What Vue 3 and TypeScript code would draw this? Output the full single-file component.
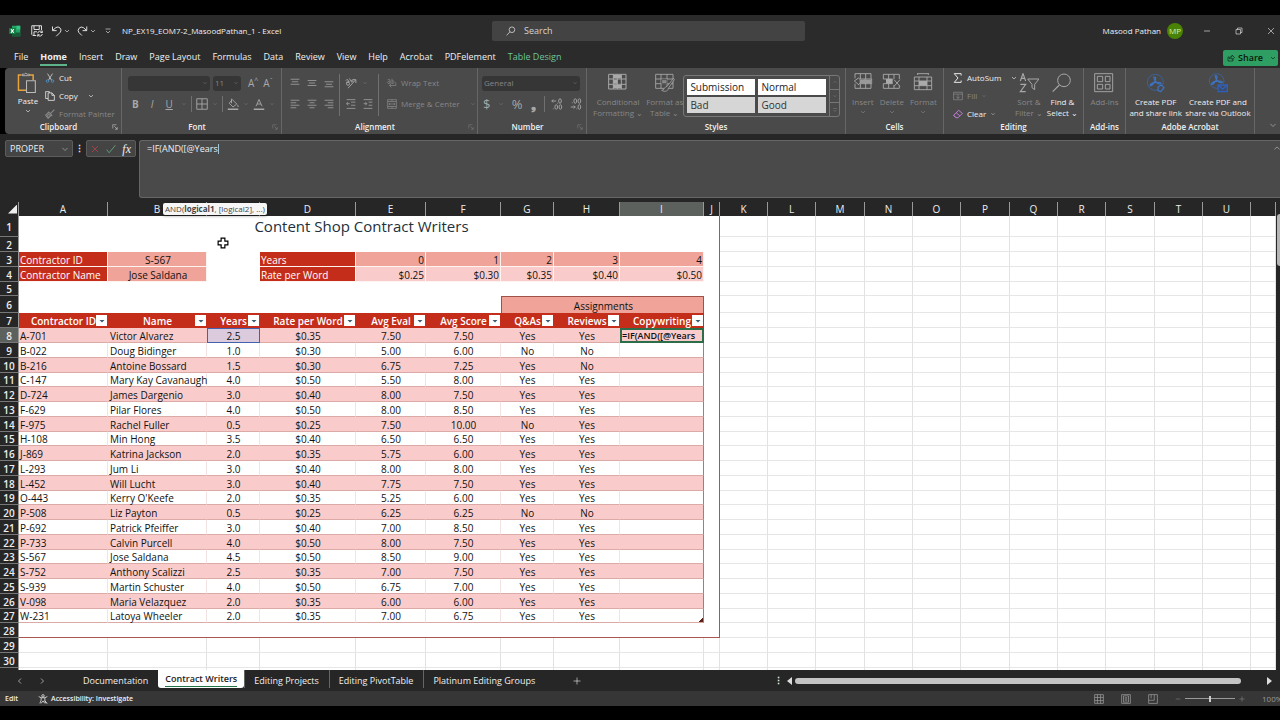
<script setup lang="ts">
import { ref } from 'vue'

interface Writer {
  id: string
  name: string
  years: string
  rate: string
  evalAvg: string
  score: string
  qa: string
  reviews: string
}

const source = `A-701|Victor Alvarez|2.5|$0.35|7.50|7.50|Yes|Yes
B-022|Doug Bidinger|1.0|$0.30|5.00|6.00|No|No
B-216|Antoine Bossard|1.5|$0.30|6.75|7.25|Yes|No
C-147|Mary Kay Cavanaugh|4.0|$0.50|5.50|8.00|Yes|Yes
D-724|James Dargenio|3.0|$0.40|8.00|7.50|Yes|Yes
F-629|Pilar Flores|4.0|$0.50|8.00|8.50|Yes|Yes
F-975|Rachel Fuller|0.5|$0.25|7.50|10.00|No|Yes
H-108|Min Hong|3.5|$0.40|6.50|6.50|Yes|Yes
J-869|Katrina Jackson|2.0|$0.35|5.75|6.00|Yes|Yes
L-293|Jum Li|3.0|$0.40|8.00|8.00|Yes|Yes
L-452|Will Lucht|3.0|$0.40|7.75|7.50|Yes|Yes
O-443|Kerry O'Keefe|2.0|$0.35|5.25|6.00|Yes|Yes
P-508|Liz Payton|0.5|$0.25|6.25|6.25|No|No
P-692|Patrick Pfeiffer|3.0|$0.40|7.00|8.50|Yes|Yes
P-733|Calvin Purcell|4.0|$0.50|8.00|7.50|Yes|Yes
S-567|Jose Saldana|4.5|$0.50|8.50|9.00|Yes|Yes
S-752|Anthony Scalizzi|2.5|$0.35|7.00|7.50|Yes|Yes
S-939|Martin Schuster|4.0|$0.50|6.75|7.00|Yes|Yes
V-098|Maria Velazquez|2.0|$0.35|6.00|6.00|Yes|Yes
W-231|Latoya Wheeler|2.0|$0.35|7.00|6.75|Yes|Yes`

const writers: Writer[] = source.split('\n').map((line) => {
  const [id, name, years, rate, evalAvg, score, qa, reviews] = line.split('|')
  return { id, name, years, rate, evalAvg, score, qa, reviews }
})

const headings = ['Contractor ID', 'Name', 'Years', 'Rate per Word', 'Avg Eval', 'Avg Score', 'Q&As', 'Reviews', 'Copywriting']
const rateRows = [
  { row: 3, label: 'Contractor ID', value: 'S-567', side: 'Years', cells: ['0', '1', '2', '3', '4'] },
  { row: 4, label: 'Contractor Name', value: 'Jose Saldana', side: 'Rate per Word', cells: ['$0.25', '$0.30', '$0.35', '$0.40', '$0.50'] },
]
const letters = 'ABCDEFGHIJKLMNOPQRSTU'.split('')
const spare = 12

const menus = ['File', 'Home', 'Insert', 'Draw', 'Page Layout', 'Formulas', 'Data', 'Review', 'View', 'Help', 'Acrobat', 'PDFelement', 'Table Design']
const sheets = ['Documentation', 'Contract Writers', 'Editing Projects', 'Editing PivotTable', 'Platinum Editing Groups']
const activeSheet = ref('Contract Writers')
const formula = ref('=IF(AND([@Years')
const nameBox = ref('PROPER')
const query = ref('')
const zoom = ref(50)
const fontName = ref('')
const fontSize = ref('11')

const ic = {
  excel: '<path fill="#21a366" stroke="none" d="M4 1h11v14H4z"/><path fill="#33c481" stroke="none" d="M10 1h5v5h-5z"/><path fill="#185c37" stroke="none" d="M4 10h11v5H4z"/><path fill="#107c41" stroke="none" d="M0 4h9v8H0z"/><path stroke="#fff" stroke-width="1.4" d="M2.600 5.600l3.800 4.800M6.400 5.600L2.600 10.400"/>',
  save: '<path d="M7 14H2.500L1 12.500V1h13v6M4 1v5h7V1M4 14V9h4"/><path d="M9 11a3 3 0 0 1 5-2l1 1M15 7.500V10h-2.500M15 12a3 3 0 0 1-5 2l-1-1M9 15.500V13h2.500"/>',
  undo: '<path d="M2 2v5.500h5.500M2.500 7l4-3.500a4.300 4.300 0 0 1 6 6L7 15"/>',
  redo: '<path d="M13 2v5.500H7.500M12.500 7l-4-3.500a4.500 4.500 0 0 0-6 6.500c1 1.500 3 2.500 4 4"/>',
  chev: '<path d="M4 6l4 4 4-4"/>',
  up: '<path d="M4 10l4-4 4 4"/>',
  collapse: '<path d="M1 5l7 7 7-7"/>',
  expand: '<path d="M1 12l7-7 7 7"/>',
  left: '<path d="M10 3L5 8l5 5"/>',
  right: '<path d="M6 3l5 5-5 5"/>',
  more: '<path d="M3 4h10M4 8l4 4 4-4"/>',
  search: '<circle cx="9.500" cy="6" r="4.500"/><path d="M6.300 9.300L1 15"/>',
  min: '<path d="M2 8h12"/>',
  restore: '<path d="M2 5h9v9H2zM5 5V2h9v9h-3"/>',
  close: '<path d="M2 2l12 12M14 2L2 14"/>',
  share: '<path d="M5 6H2v8h10v-4M5 10c0-4 2-5 5-5V2l5 5-5 4V8c-2 0-4 0-5 2z"/>',
  paste: '<path stroke="#e8a33d" stroke-width="2" d="M6 4H2v21h11M17 4h5v7"/><path stroke="#bbb" fill="#4a4a4a" d="M7 5V3h3a2.500 2.500 0 0 1 4 0h3v2z"/><path stroke="#bbb" fill="#4a4a4a" stroke-width="1.400" d="M13 12h12v16H13z"/>',
  cut: '<path stroke="#ddd" d="M4 1l6.500 10.500M12 1L5.500 11.500"/><circle stroke="#4b9fe0" cx="4" cy="13" r="2"/><circle stroke="#4b9fe0" cx="12" cy="13" r="2"/>',
  copy: '<path d="M5 12H1V1h6v2M5 3h6l4 4v8H5zM11 3v4h4"/>',
  brush: '<path d="M15 1L9 7M6 5l5 5-2 1-5-4zM4 7l-3 3 4 5 4-4M3 12l2-2M5 14l2-2" stroke-width="1.700"/>',
  launch: '<path d="M2 12V2h10M6 6l8 8M14 8v6H8"/>',
  borders: '<path d="M1 1h14v14H1zM8 1v14M1 8h14"/>',
  fill: '<path d="M7 2l6 6-5 4-5-5zM6 1v6M14 9l1 3"/><path d="M1 15h14" stroke-width="2"/>',
  fontcol: '<path d="M4 11l4-9 4 9M5.500 8h5"/><path d="M1 15h14" stroke-width="2"/>',
  top: '<path d="M1 2h14M3 6h10M1 10h14"/>',
  mid: '<path d="M1 4h14M3 8h10M1 12h14"/>',
  bot: '<path d="M1 6h14M3 10h10M1 14h14"/>',
  al: '<path d="M1 2h14M1 6h9M1 10h14M1 14h9"/>',
  ac: '<path d="M1 2h14M4 6h8M1 10h14M4 14h8"/>',
  ar: '<path d="M1 2h14M6 6h9M1 10h14M6 14h9"/>',
  orient: '<path d="M4 15L14 4M10 3.500h4.500V8M1 5l2-2 3 4M1.500 7.500l4-2"/><circle cx="4" cy="9" r="2"/><path d="M6 2l3 5M8 5c3-2 4 1 1 2"/>',
  outd: '<path d="M1 1h14M8 5h7M8 10h7M1 15h14M6 7.500H1M3 5L1 7.500 3 10"/>',
  ind: '<path d="M1 1h14M9 5h6M9 10h6M1 15h14M1 7.500h5M4 5l2 2.500L4 10"/>',
  wrap: '<path d="M1 3c3-2 4 0 4 2v4M5 5c-5 0-5 4-2 4 1 0 2-1 2-2M8 1v8M8 5c4-2 5 4 0 4M14 7v5H4M7 9l-3 3 3 3"/>',
  merge: '<path d="M1 1h14v14H1zM1 4h14M1 12h14M8 1v3M8 12v3M3 8h10M5 6L3 8l2 2M11 6l2 2-2 2"/>',
  decUp: '<path d="M7 4H1M3 2L1 4l2 2M8.500 6.500v1M3 14v1"/><ellipse cx="12" cy="4" rx="1.800" ry="3"/><ellipse cx="7" cy="12" rx="1.800" ry="3"/><ellipse cx="12.500" cy="12" rx="1.800" ry="3"/>',
  decDn: '<path d="M1 12h6M5 10l2 2-2 2M3 6v1M9 14v1"/><ellipse cx="7" cy="4" rx="1.800" ry="3"/><ellipse cx="12.500" cy="4" rx="1.800" ry="3"/><ellipse cx="12.500" cy="12" rx="1.800" ry="3"/>',
  cond: '<path d="M1 2h26v22H1zM1 9h26M1 17h26M8 2v22M20 2v22M14 2v22" stroke-width="1.500"/><path fill="#aaa" stroke="none" d="M8 3h12v5H8zM8 10h6v6H8zM8 18h12v5H8z"/>',
  fmtTable: '<path d="M1 2h26v21H1zM1 9h26M1 16h26M9 2v21M18 2v21" stroke-width="1.300"/><path fill="#888" stroke="#4a4a4a" d="M10 10h8v6h-8z"/><path fill="#4a4a4a" d="M28 8L18 20l-2 1c-3 1-2 5-6 5 5 3 10 1 10-3L29 10z"/>',
  insert: '<path d="M3 1h24v8M3 1v7M3 16v7h24v-7M11 1v8M19 1v8M11 16v7M19 16v7M9 9h19v7H9M9 7l-7 5 7 6M18 9v7" stroke-width="1.400"/><path fill="#999" stroke="none" d="M10 10h17v5H10z"/>',
  del: '<path d="M2 2h24v7M2 2v7h14M2 16h14M2 16v7h24v-4M10 2v7M18 2v7M10 16v7M18 18v5M18 10l9 10M27 10l-9 10" stroke-width="1.400"/><path fill="#aaa" stroke="none" d="M6 9h10v7H6z"/>',
  format: '<path d="M2 6h26v19H2zM2 12h26M2 19h26M9 6v19M21 6v19M7 1h16M7 0v3M23 0v3" stroke-width="1.400"/><path fill="#aaa" stroke="none" d="M9 12h12v7H9z"/>',
  sum: '<path d="M13 4V1H2l6 7-6 7h11v-3" stroke-width="1.500"/>',
  down: '<path d="M1 2h14v12H1zM1 5h14M8 6v6M5 9l3 3 3-3"/>',
  erase: '<path stroke="#c07bd6" stroke-width="1.600" d="M9 2l6 5-7 7H5l-4-4zM5 6l6 5M1 10l4 4"/>',
  sort: '<path d="M2 12l4-11 4 11M3.500 8h5M2 17h8L2 28h8" stroke-width="1.700"/><path d="M13 9h17l-6.500 8v8l-4-3v-5z" stroke-width="1.500"/>',
  find: '<circle cx="18" cy="11" r="9.500" stroke-width="1.500"/><path stroke-width="1.700" d="M11 18L1 28"/>',
  addins: '<path d="M1 1h27v27H1zM5 5h8v8H5zM17 5h7v8h-7zM5 17h8v7H5zM17 17h7v7h-7z" stroke-width="1.400"/>',
  pdf: '<circle cx="14" cy="14" r="12" stroke="#3a629c" stroke-width="1.400"/><path stroke="#3c74c4" stroke-width="1.700" d="M13 6c3 0 1 6-2 10s-6 4-4 1 13-4 15-2-5 3-8-3-3-6-1-6"/><path stroke="#3c74c4" stroke-width="1.800" fill="#4a4a4a" d="M18 21l5-3 4 4-5 6-4-2z"/>',
  mail: '<circle cx="13" cy="12" r="11" stroke="#3a629c" stroke-width="1.400"/><path stroke="#3c74c4" stroke-width="1.700" d="M12 4c3 0 1 6-2 10s-6 4-4 1 13-4 15-2-5 3-8-3-3-6-1-6"/><path stroke="#2f5fba" stroke-width="2" fill="#3d4b68" d="M15 18h14v10H15zM15 18l7 6 7-6"/>',
  cancel: '<path stroke="#b8434a" stroke-width="1.500" d="M2 2l12 12M14 2L2 14"/>',
  ok: '<path stroke="#5ea37c" stroke-width="1.500" d="M1 9l4 5L15 2"/>',
  access: '<circle cx="8" cy="3" r="2"/><path d="M1 4l4 2v4l-2 5M15 4l-4 2v4l2 5M5 6h6M5 15l3-4 3 4M10 11l5 4"/>',
  plus: '<path d="M8 1v14M1 8h14"/>',
  normal: '<path d="M1 1h14v14H1zM1 5.500h14M1 10.500h14M5.500 1v14M10.500 1v14"/>',
  layout: '<path d="M1 1h14v14H1zM4 3h8v10H4zM6 6h4M6 8h4M6 10h4"/>',
  breaks: '<path d="M1 1h14v14H1zM1 10h9V1M5 1v6"/>',
  filter: '<path fill="#3c5a6a" stroke="none" d="M3 6h10l-5 5z"/>',
  cross: '<path fill="#fff" stroke="#000" stroke-width="1.600" d="M5.500 1.500h5v4h4v5h-4v4h-5v-4h-4v-5h4z"/>',
}
</script>

<template>
  <main class="screen">
    <header class="title-bar">
      <div class="quick">
        <svg class="i12" viewBox="0 0 16 16" v-html="ic.excel" />
        <button class="ib save" aria-label="Save"><svg class="i12" viewBox="0 0 16 16" v-html="ic.save" /></button>
        <button class="ib" aria-label="Undo"><svg class="i12" viewBox="0 0 16 16" v-html="ic.undo" /><svg class="i8" viewBox="0 0 16 16" v-html="ic.chev" /></button>
        <button class="ib" aria-label="Redo"><svg class="i12" viewBox="0 0 16 16" v-html="ic.redo" /><svg class="i8" viewBox="0 0 16 16" v-html="ic.chev" /></button>
        <button class="ib more" aria-label="Customize toolbar"><svg class="i8" viewBox="0 0 16 16" v-html="ic.more" /></button>
        <span class="doc">NP_EX19_EOM7-2_MasoodPathan_1 - Excel</span>
      </div>
      <label class="search">
        <svg class="i10" viewBox="0 0 16 16" v-html="ic.search" />
        <input v-model="query" type="text" placeholder="Search" aria-label="Search">
      </label>
      <div class="account">
        <span>Masood Pathan</span>
        <span class="avatar">MP</span>
        <button class="ib" aria-label="Minimize"><svg class="i8" viewBox="0 0 16 16" v-html="ic.min" /></button>
        <button class="ib" aria-label="Restore"><svg class="i8" viewBox="0 0 16 16" v-html="ic.restore" /></button>
        <button class="ib" aria-label="Close"><svg class="i8" viewBox="0 0 16 16" v-html="ic.close" /></button>
      </div>
    </header>

    <nav class="menus">
      <button v-for="m in menus" :key="m" :class="{ on: m === 'Home', ctx: m === 'Table Design' }">{{ m }}</button>
      <button class="share"><svg class="i8" viewBox="0 0 16 16" v-html="ic.share" />Share<svg class="i8 drop" viewBox="0 0 16 16" v-html="ic.chev" /></button>
    </nav>

    <section class="ribbon">
      <div class="group clipboard">
        <div class="tools">
          <button class="big bright"><svg class="i24" viewBox="0 0 30 30" v-html="ic.paste" /><span>Paste</span><svg class="i8" viewBox="0 0 16 16" v-html="ic.chev" /></button>
          <div class="stack">
            <button class="line bright"><svg class="i10" viewBox="0 0 16 16" v-html="ic.cut" />Cut</button>
            <button class="line bright"><svg class="i10" viewBox="0 0 16 16" v-html="ic.copy" />Copy<svg class="i8 push" viewBox="0 0 16 16" v-html="ic.chev" /></button>
            <button class="line"><svg class="i10" viewBox="0 0 16 16" v-html="ic.brush" />Format Painter</button>
          </div>
        </div>
        <div class="caption"><span>Clipboard</span><svg class="i6 bright" viewBox="0 0 16 16" v-html="ic.launch" /></div>
      </div>

      <div class="group font">
        <div class="tools rows">
          <div class="row">
            <label class="combo wide"><input v-model="fontName" type="text" aria-label="Font"><svg class="i6" viewBox="0 0 16 16" v-html="ic.chev" /></label>
            <label class="combo slim"><input v-model="fontSize" type="text" aria-label="Font size"><svg class="i6" viewBox="0 0 16 16" v-html="ic.chev" /></label>
            <button class="letter grow">A<sup>^</sup></button>
            <button class="letter">A<sup>ˇ</sup></button>
          </div>
          <div class="row spread">
            <button class="letter style"><b>B</b></button>
            <button class="letter style"><i>I</i></button>
            <button class="letter style"><u>U</u></button>
            <svg class="i6" viewBox="0 0 16 16" v-html="ic.chev" />
            <span class="bar" />
            <button class="ib" aria-label="Borders"><svg class="i12" viewBox="0 0 16 16" v-html="ic.borders" /></button>
            <svg class="i6" viewBox="0 0 16 16" v-html="ic.chev" />
            <span class="bar" />
            <button class="ib" aria-label="Fill color"><svg class="i12" viewBox="0 0 16 16" v-html="ic.fill" /></button>
            <svg class="i6" viewBox="0 0 16 16" v-html="ic.chev" />
            <button class="ib" aria-label="Font color"><svg class="i12" viewBox="0 0 16 16" v-html="ic.fontcol" /></button>
            <svg class="i6" viewBox="0 0 16 16" v-html="ic.chev" />
          </div>
        </div>
        <div class="caption"><span>Font</span><svg class="i6" viewBox="0 0 16 16" v-html="ic.launch" /></div>
      </div>

      <div class="group align">
        <div class="tools">
          <div class="pads">
            <button v-for="k in (['top', 'mid', 'bot', 'al', 'ac', 'ar'] as const)" :key="k" class="ib" :aria-label="k"><svg class="i10" viewBox="0 0 16 16" v-html="ic[k]" /></button>
          </div>
          <span class="bar tall" />
          <div class="pads two">
            <button class="ib" aria-label="Orientation"><svg class="i12" viewBox="0 0 16 16" v-html="ic.orient" /></button>
            <svg class="i6 mark" viewBox="0 0 16 16" v-html="ic.chev" />
            <button class="ib" aria-label="Decrease indent"><svg class="i10" viewBox="0 0 16 16" v-html="ic.outd" /></button>
            <button class="ib" aria-label="Increase indent"><svg class="i10" viewBox="0 0 16 16" v-html="ic.ind" /></button>
          </div>
          <span class="bar tall" />
          <div class="stack duo">
            <button class="line"><svg class="i10" viewBox="0 0 16 16" v-html="ic.wrap" />Wrap Text</button>
            <button class="line"><svg class="i10" viewBox="0 0 16 16" v-html="ic.merge" />Merge &amp; Center<svg class="i6 push" viewBox="0 0 16 16" v-html="ic.chev" /></button>
          </div>
        </div>
        <div class="caption"><span>Alignment</span><svg class="i6" viewBox="0 0 16 16" v-html="ic.launch" /></div>
      </div>

      <div class="group number">
        <div class="tools rows">
          <div class="row">
            <button class="combo full"><span>General</span><svg class="i6" viewBox="0 0 16 16" v-html="ic.chev" /></button>
          </div>
          <div class="row spread">
            <button class="letter sym">$</button>
            <svg class="i6" viewBox="0 0 16 16" v-html="ic.chev" />
            <button class="letter sym">%</button>
            <button class="letter sym"><b>❟</b></button>
            <span class="bar" />
            <button class="ib" aria-label="Increase decimal"><svg class="i12" viewBox="0 0 16 16" v-html="ic.decUp" /></button>
            <button class="ib" aria-label="Decrease decimal"><svg class="i12" viewBox="0 0 16 16" v-html="ic.decDn" /></button>
          </div>
        </div>
        <div class="caption"><span>Number</span><svg class="i6" viewBox="0 0 16 16" v-html="ic.launch" /></div>
      </div>

      <div class="group styles">
        <div class="tools">
          <button class="big"><svg class="i20" viewBox="0 0 30 30" v-html="ic.cond" /><span>Conditional<br>Formatting ⌄</span></button>
          <button class="big second"><svg class="i20" viewBox="0 0 30 30" v-html="ic.fmtTable" /><span>Format as<br>Table ⌄</span></button>
          <div class="gallery">
            <div class="swatches">
              <button class="hot">Submission</button>
              <button class="hot">Normal</button>
              <button>Bad</button>
              <button>Good</button>
            </div>
            <div class="spin">
              <button aria-label="Previous styles"><svg class="i6" viewBox="0 0 16 16" v-html="ic.up" /></button>
              <button aria-label="Next styles"><svg class="i6" viewBox="0 0 16 16" v-html="ic.chev" /></button>
              <button aria-label="All styles"><svg class="i6" viewBox="0 0 16 16" v-html="ic.more" /></button>
            </div>
          </div>
        </div>
        <div class="caption"><span>Styles</span></div>
      </div>

      <div class="group cells">
        <div class="tools even">
          <button class="big"><svg class="i20" viewBox="0 0 30 30" v-html="ic.insert" /><span>Insert</span><svg class="i8" viewBox="0 0 16 16" v-html="ic.chev" /></button>
          <button class="big"><svg class="i20" viewBox="0 0 30 30" v-html="ic.del" /><span>Delete</span><svg class="i8" viewBox="0 0 16 16" v-html="ic.chev" /></button>
          <button class="big"><svg class="i20" viewBox="0 0 30 30" v-html="ic.format" /><span>Format</span><svg class="i8" viewBox="0 0 16 16" v-html="ic.chev" /></button>
        </div>
        <div class="caption"><span>Cells</span></div>
      </div>

      <div class="group editing">
        <div class="tools">
          <div class="stack">
            <button class="line bright"><svg class="i10" viewBox="0 0 16 16" v-html="ic.sum" />AutoSum<svg class="i8 push" viewBox="0 0 16 16" v-html="ic.chev" /></button>
            <button class="line"><svg class="i10" viewBox="0 0 16 16" v-html="ic.down" />Fill<svg class="i6" viewBox="0 0 16 16" v-html="ic.chev" /></button>
            <button class="line bright"><svg class="i10" viewBox="0 0 16 16" v-html="ic.erase" />Clear<svg class="i6" viewBox="0 0 16 16" v-html="ic.chev" /></button>
          </div>
          <button class="big"><svg class="i20" viewBox="0 0 30 30" v-html="ic.sort" /><span>Sort &amp;<br>Filter ⌄</span></button>
          <button class="big bright"><svg class="i20" viewBox="0 0 30 30" v-html="ic.find" /><span>Find &amp;<br>Select ⌄</span></button>
        </div>
        <div class="caption"><span>Editing</span></div>
      </div>

      <div class="group addins">
        <div class="tools even">
          <button class="big"><svg class="i20" viewBox="0 0 30 30" v-html="ic.addins" /><span>Add-ins</span></button>
        </div>
        <div class="caption"><span>Add-ins</span></div>
      </div>

      <div class="group acrobat">
        <div class="tools even">
          <button class="big bright"><svg class="i20" viewBox="0 0 30 30" v-html="ic.pdf" /><span>Create PDF<br>and share link</span></button>
          <button class="big bright"><svg class="i20" viewBox="0 0 30 30" v-html="ic.mail" /><span>Create PDF and<br>share via Outlook</span></button>
        </div>
        <div class="caption"><span>Adobe Acrobat</span></div>
      </div>
      <button class="ib collapse" aria-label="Collapse ribbon"><svg class="i6" viewBox="0 0 16 16" v-html="ic.collapse" /></button>
    </section>

    <section class="formula-bar">
      <label class="name-box"><input v-model="nameBox" type="text" aria-label="Name box"><svg class="i6" viewBox="0 0 16 16" v-html="ic.collapse" /></label>
      <span class="dots">⋮</span>
      <div class="fx">
        <button class="ib" aria-label="Cancel"><svg class="i8" viewBox="0 0 16 16" v-html="ic.cancel" /></button>
        <button class="ib" aria-label="Enter"><svg class="i10" viewBox="0 0 16 16" v-html="ic.ok" /></button>
        <button class="ib fn" aria-label="Insert function"><i>fx</i></button>
      </div>
      <div class="entry">
        <textarea v-model="formula" aria-label="Formula" spellcheck="false" rows="1" />
        <span class="caret" />
        <svg class="i6" viewBox="0 0 16 16" v-html="ic.expand" />
      </div>
    </section>

    <section class="sheet">
      <div class="pane">
        <table>
          <colgroup>
            <col class="c-head"><col class="c-a"><col class="c-b"><col class="c-c"><col class="c-d"><col class="c-e"><col class="c-f"><col class="c-c"><col class="c-h"><col class="c-i"><col class="c-j">
            <col v-for="n in 11" :key="n" :class="n % 3 === 0 ? 'c-49' : 'c-48'">
            <col>
          </colgroup>
          <thead>
            <tr>
              <th class="corner"><span /></th>
              <th v-for="l in letters" :key="l" scope="col" :class="{ cur: l === 'I' }">{{ l }}</th>
              <th />
            </tr>
          </thead>
          <tbody>
            <tr class="r21">
              <th scope="row">1</th>
              <td class="heading" colspan="9">Content Shop Contract Writers</td>
              <td class="edge" />
              <td v-for="n in spare" :key="n" class="g" />
            </tr>
            <tr class="r15">
              <th scope="row">2</th>
              <td colspan="9" />
              <td class="edge" />
              <td v-for="n in spare" :key="n" class="g" />
            </tr>
            <tr v-for="r in rateRows" :key="r.row" class="r15">
              <th scope="row">{{ r.row }}</th>
              <td class="red">{{ r.label }}</td>
              <td class="rose mid">{{ r.value }}</td>
              <td />
              <td class="red">{{ r.side }}</td>
              <td v-for="c in r.cells" :key="c" class="end" :class="r.row === 3 ? 'rose' : 'pink'">{{ c }}</td>
              <td class="edge" />
              <td v-for="n in spare" :key="n" class="g" />
            </tr>
            <tr class="r14">
              <th scope="row">5</th>
              <td colspan="9" />
              <td class="edge" />
              <td v-for="n in spare" :key="n" class="g" />
            </tr>
            <tr class="r17">
              <th scope="row">6</th>
              <td colspan="6" />
              <td class="assign" colspan="3">Assignments</td>
              <td class="edge" />
              <td v-for="n in spare" :key="n" class="g" />
            </tr>
            <tr class="r15">
              <th scope="row">7</th>
              <td v-for="h in headings" :key="h" class="head">
                <div><span>{{ h }}</span><button :aria-label="'Filter ' + h"><svg class="i8" viewBox="0 0 16 16" v-html="ic.filter" /></button></div>
              </td>
              <td class="edge" />
              <td v-for="n in spare" :key="n" class="g" />
            </tr>
            <tr v-for="(w, i) in writers" :key="w.id" class="data" :class="[i % 4 === 3 ? 'r14' : 'r15', { band: i % 2 === 0 }]">
              <th scope="row" :class="{ cur: i === 0 }">{{ i + 8 }}</th>
              <td>{{ w.id }}</td>
              <td>{{ w.name }}</td>
              <td class="mid" :class="{ ref: i === 0 }">{{ w.years }}</td>
              <td class="mid">{{ w.rate }}</td>
              <td class="mid">{{ w.evalAvg }}</td>
              <td class="mid">{{ w.score }}</td>
              <td class="mid">{{ w.qa }}</td>
              <td class="mid">{{ w.reviews }}</td>
              <td class="last" :class="{ edit: i === 0, fold: i === 19 }">{{ i === 0 ? '=IF(AND([@Years' : '' }}</td>
              <td class="edge" />
              <td v-for="n in spare" :key="n" class="g" />
            </tr>
            <tr class="r15 close">
              <th scope="row">28</th>
              <td colspan="9" />
              <td class="edge" />
              <td v-for="n in spare" :key="n" class="g" />
            </tr>
            <tr v-for="r in ['29', '30', '']" :key="r" class="r15">
              <th scope="row">{{ r }}</th>
              <td v-for="n in spare + 10" :key="n" class="g" />
            </tr>
          </tbody>
        </table>
        <div class="tip">AND(<b>logical1</b>, [logical2], ...)</div>
        <svg class="i12 pointer" viewBox="0 0 16 16" v-html="ic.cross" />
      </div>
      <div class="vscroll"><span /></div>
    </section>

    <footer class="tabs">
      <button class="ib" aria-label="Previous sheet"><svg class="i8" viewBox="0 0 16 16" v-html="ic.left" /></button>
      <button class="ib" aria-label="Next sheet"><svg class="i8" viewBox="0 0 16 16" v-html="ic.right" /></button>
      <div class="names">
        <button v-for="s in sheets" :key="s" :class="{ active: s === activeSheet }" @click="activeSheet = s"><span>{{ s }}</span></button>
      </div>
      <button class="ib add" aria-label="New sheet"><svg class="i8" viewBox="0 0 16 16" v-html="ic.plus" /></button>
      <div class="hscroll"><span class="dots">⋮</span><span class="tri back" /><span class="track"><span class="thumb" /></span><span class="tri" /></div>
    </footer>

    <footer class="status">
      <span>Edit</span>
      <span class="acc"><svg class="i10" viewBox="0 0 16 16" v-html="ic.access" />Accessibility: Investigate</span>
      <div class="views">
        <button class="ib" aria-label="Normal view"><svg class="i10" viewBox="0 0 16 16" v-html="ic.normal" /></button>
        <button class="ib" aria-label="Page layout"><svg class="i10" viewBox="0 0 16 16" v-html="ic.layout" /></button>
        <button class="ib" aria-label="Page breaks"><svg class="i10" viewBox="0 0 16 16" v-html="ic.breaks" /></button>
        <div class="zoom"><svg class="i6" viewBox="0 0 16 16" v-html="ic.min" /><input v-model="zoom" type="range" min="0" max="100" aria-label="Zoom"><svg class="i6" viewBox="0 0 16 16" v-html="ic.plus" /></div>
        <span class="pct">100%</span>
      </div>
    </footer>
  </main>
</template>

<style>
body { background: #000; overflow: hidden; }
</style>

<style scoped>
* { box-sizing: border-box; }
.screen { display: flex; flex-direction: column; height: 100vh; padding: 15px 0 14px; background: #000; color: #f0f0f0; font: 9px/12px "Open Sans", "Noto Sans", sans-serif; white-space: nowrap; overflow: hidden; }
button, input, textarea { font: inherit; color: inherit; background: none; border: 0; padding: 0; margin: 0; outline: 0; min-width: 0; }
svg { fill: none; stroke: currentColor; stroke-width: 1.2; flex: none; display: block; }
.i6 { width: 6px; height: 6px; }
.i8 { width: 8px; height: 8px; }
.i10 { width: 10px; height: 10px; }
.i12 { width: 12px; height: 12px; }
.i20 { width: 20px; height: 20px; }
.i24 { width: 22px; height: 22px; }
.ib { display: flex; align-items: center; justify-content: center; }

.title-bar { display: grid; grid-template-columns: 492fr 313fr 475fr; align-items: center; height: 32px; background: #2b2b2b; font-size: 8px; }
.quick { display: flex; align-items: center; gap: 6px; padding-left: 9px; }
.quick .save { padding: 0 2px 0 4px; }
.quick .more { padding: 0 4px 0 1px; }
.search { display: flex; align-items: center; gap: 8px; height: 20px; padding: 0 14px; border-radius: 2px; background: #434343; color: #ddd; }
.search input { flex: 1; font-size: 9px; }
.search input::placeholder { color: #d4d4d4; opacity: 1; }
.account { display: flex; align-items: center; justify-content: flex-end; gap: 24px; padding-right: 5px; }
.account > span:first-child { margin-right: -18px; }
.avatar { width: 16px; height: 16px; margin-right: -4px; border-radius: 50%; background: #498205; color: #d8f0b0; line-height: 16px; text-align: center; }

.menus { display: flex; align-items: center; gap: 12px; height: 21px; padding: 0 2px 0 14px; background: #2b2b2b; }
.menus button { height: 16px; padding-top: 1px; border-bottom: 2px solid transparent; }
.menus .on { font-weight: 700; border-color: #5fb38a; }
.menus .ctx { color: #6cc79b; }
.menus .share { display: flex; align-items: center; gap: 3px; margin-left: auto; padding: 0 1px 0 4px; border: 0; border-radius: 2px; background: #2f9e62; color: #08180f; font-weight: 600; }
.share .drop { margin-left: 3px; }

.ribbon { display: flex; height: 66px; margin-left: 5px; border-radius: 4px 0 0 4px; background: #4a4a4a; color: #878787; font-size: 8px; }
.group { display: flex; flex-direction: column; flex: none; border-right: 1px solid #666; }
.tools { display: flex; flex: 1; min-height: 0; padding-top: 4px; }
.caption { display: flex; align-items: center; height: 14px; color: #f0f0f0; font-weight: 600; }
.caption span { flex: 1; text-align: center; }
.caption svg { margin-right: 3px; color: #888; }
.bright, .caption svg.bright { color: #f0f0f0; }
.big { display: flex; flex-direction: column; align-items: center; align-self: flex-start; gap: 1px; line-height: 11px; text-align: center; }
.big .i20 { margin: 1px 0 2px; color: #a8a8a8; }
.stack { display: flex; flex-direction: column; align-items: flex-start; }
.line { display: flex; align-items: center; gap: 4px; height: 17px; padding-bottom: 5px; }
.push { margin-left: 5px; }
.rows { flex-direction: column; gap: 5px; padding: 7px 6px 0; }
.row { display: flex; align-items: center; height: 16px; gap: 3px; }
.spread { justify-content: space-between; gap: 0; }
.combo { display: flex; align-items: center; justify-content: space-between; height: 15px; padding: 0 2px; border-radius: 3px; background: #363636; }
.combo.wide { flex: none; width: 82px; }
.combo.slim { flex: none; width: 28px; }
.combo.full { width: 98px; text-align: left; }
.combo input { width: 100%; }
.letter { font-size: 10px; line-height: 14px; color: #a8a8a8; padding: 0 1px; }
.letter.style { padding: 0 4px; }
.letter sup { font-size: 7px; line-height: 6px; }
.letter.sym { font-size: 13px; }
.ribbon .rows .ib, .pads .ib { color: #a8a8a8; }
.bar { width: 1px; height: 16px; background: #707070; }
.bar.tall { height: 42px; margin-top: 2px; }
.clipboard { width: 117px; }
.clipboard .tools { padding-left: 12px; gap: 6px; }
.clipboard .stack { gap: 1px; }
.grow { margin-left: 3px; }
.font { width: 160px; }
.align { width: 196px; }
.align .tools { padding-left: 4px; gap: 2px; }
.pads { display: grid; grid-template-columns: repeat(3, 17px); grid-template-rows: 22px 20px; align-items: center; align-self: flex-start; }
.pads.two { grid-template-columns: 17px 17px; }
.mark { margin-left: 3px; }
.duo { padding: 0 0 0 6px; }
.duo .line { height: 21px; padding: 0; }
.duo .push { margin-left: 6px; }
.number { width: 109px; }
.number .rows { padding: 7px 4px 0; }
.styles { width: 259px; }
.styles .tools { padding-left: 6px; }
.styles .second { margin-left: 3px; }
.gallery { display: flex; align-self: flex-start; height: 42px; margin: 3px 0 0; border: 1px solid #777; border-radius: 3px; }
.swatches { display: grid; grid-template-columns: 68px 68px; grid-auto-rows: 16px; gap: 2px 3px; padding: 3px; }
.swatches button { padding-left: 3px; background: #d6d6d6; color: #333; font-size: 10px; line-height: 14px; text-align: left; }
.swatches .hot { background: #fff; color: #222; }
.spin { display: flex; flex-direction: column; width: 10px; border-left: 1px solid #777; }
.spin button { display: flex; flex: 1; align-items: center; justify-content: center; }
.spin button + button { border-top: 1px solid #777; }
.cells { width: 98px; }
.even { justify-content: space-evenly; }
.editing { width: 140px; }
.editing .tools { padding-left: 9px; gap: 4px; }
.editing .stack { width: 58px; gap: 1px; }
.addins { width: 42px; }
.acrobat { width: 129px; }
.collapse { flex: 1; align-items: flex-end; padding: 0 0 6px 10px; color: #eee; }

.formula-bar { display: flex; align-items: flex-start; height: 68px; padding-top: 6px; padding-left: 5px; background: #262626; }
.name-box { display: flex; align-items: center; width: 68px; height: 17px; padding: 0 4px; border: 1px solid #5c5c5c; border-radius: 2px; background: #444; }
.name-box input { flex: 1; }
.formula-bar .dots { width: 13px; line-height: 17px; text-align: center; font-weight: 700; }
.fx { display: flex; align-items: center; justify-content: space-between; width: 50px; height: 17px; margin-right: 3px; padding: 0 4px; border: 1px solid #5c5c5c; border-radius: 2px; background: #444; }
.fn { font: 12px/14px "Liberation Serif", serif; }
.entry { display: flex; flex: 1; height: 58px; border: 1px solid #666; border-right: 0; border-radius: 3px 0 0 3px; background: #4a4a4a; }
.entry textarea { field-sizing: content; padding: 1px 0 0 7px; resize: none; overflow: hidden; white-space: pre; line-height: 13px; }
.caret { width: 1px; height: 10px; margin-top: 3px; background: #9fc4d8; }
.entry svg { margin: 4px 0 0 auto; }

.sheet { display: flex; flex: 1; min-height: 0; background: #262626; }
.pane { position: relative; flex: 1; min-width: 0; overflow: hidden; }
table { width: 100%; table-layout: fixed; border-collapse: separate; border-spacing: 0; background: #fff; color: #111; font-size: 10px; line-height: 12px; }
.c-head { width: 19px; }
.c-a { width: 89px; }
.c-b { width: 99px; }
.c-c { width: 53px; }
.c-d { width: 96px; }
.c-e { width: 70px; }
.c-f { width: 75px; }
.c-h { width: 66px; }
.c-i { width: 84px; }
.c-j { width: 16px; }
.c-48 { width: 48px; }
.c-49 { width: 49px; }
th, td { padding: 1px 0 0; }
thead th { height: 14px; padding: 0; border-right: 1px solid #999; background: #262626; color: #eee; font-weight: 400; }
thead .cur, tbody th.cur { background: #5c615e; }
.corner span { display: block; width: 9px; height: 9px; margin-left: 8px; background: #eee; clip-path: polygon(100% 0, 100% 100%, 0 100%); }
tbody th { border-bottom: 1px solid #777; border-right: 1px solid #999; background: #262626; color: #eee; font-weight: 600; text-align: center; }
.r14 > * { height: 14px; }
.r15 > * { height: 15px; }
.r17 > * { height: 17px; }
.r21 > * { height: 21px; }
td { padding-left: 1px; }
td:nth-child(3) { padding-left: 2px; }
.heading { padding: 0 0 1px; color: #22303a; font-size: 15px; line-height: 18px; text-align: center; }
.g { border-right: 1px solid #e2e2e2; border-bottom: 1px solid #e6e6e6; }
.edge, .data td.edge { border-right: 1px solid #a8564e; }
.red, .rose, .pink { border-right: 1px solid #fff3f0; border-bottom: 1px solid #fff3f0; }
.red { background: #c52d1b; color: #fff; }
.rose { background: #f0a398; }
.pink { background: #f9cccb; }
.mid { text-align: center; }
.end { text-align: right; padding-right: 1px; }
.assign { border: 1px solid #a0524a; border-bottom: 0; background: #f0a398; text-align: center; }
td.head { padding: 0; background: #c52d1b; color: #fff; font-weight: 600; text-align: center; }
.head div { display: grid; align-items: center; }
.head span, .head button { grid-area: 1 / 1; }
.head button { display: flex; align-items: center; justify-content: center; justify-self: end; width: 11px; height: 11px; margin-right: 1px; background: #fff; }
.data td:not(.g):not(.edge) { border-bottom: 1px solid #dcaaa6; border-right: 1px solid #f3e4e3; }
.data.band td:not(.g):not(.edge) { border-right-color: #f9cccb; background: #f9cccb; }
.data td.last:not(.g):not(.edge) { border-right-color: #b8736c; }
.data.band td.ref:not(.g):not(.edge) { background: #dccbdd; outline: 1px solid #4461b0; outline-offset: -1px; }
.data.band td.edit:not(.g):not(.edge) { padding-left: 2px; outline: 2px solid #2c6e49; outline-offset: -2px; font-size: 9px; font-weight: 600; }
.data td.fold { background: linear-gradient(135deg, transparent 50%, #5c2018 50%) right bottom / 4px 4px no-repeat; }
.close td:not(.g) { border-bottom: 1px solid #a8564e; }
.tip { position: absolute; left: 163px; top: 1px; padding: 0 2px; border-radius: 2px; background: #f6f6f6; color: #444; font-size: 8px; line-height: 12px; box-shadow: 0 1px 3px #0006; }
.pointer { position: absolute; left: 217px; top: 35px; }
.vscroll { width: 4px; padding: 12px 0 0 1px; background: #262626; }
.vscroll span { display: block; height: 52px; border-radius: 3px 0 0 3px; background: #b5b5b5; }

.tabs { display: flex; align-items: center; height: 21px; padding-left: 16px; gap: 14px; background: #262626; }
.names { display: flex; align-self: stretch; align-items: flex-start; margin-left: 14px; }
.names button { height: 18px; padding: 3px 10px 0 9px; }
.names button + button:not(.active) { border-left: 1px solid #666; }
.names .active { padding: 1px 7px 0; border-radius: 0 0 3px 3px; background: #fff; color: #1c1c1c; font-weight: 600; }
.names span { display: block; line-height: 14px; }
.names .active span { border-bottom: 1px solid #217346; }
.add { margin-left: 14px; }
.hscroll { display: flex; flex: none; align-items: center; width: 40%; margin-left: auto; padding-right: 8px; gap: 3px; }
.hscroll .dots { width: 10px; font-weight: 700; }
.tri { border: 4px solid transparent; border-left: 5px solid #ddd; border-right: 0; }
.tri.back { border-left: 0; border-right: 5px solid #ddd; }
.track { flex: 1; height: 6px; }
.thumb { display: block; width: 95%; height: 6px; border-radius: 3px; background: #c4c4c4; }

.status { display: flex; align-items: center; height: 15px; padding-left: 5px; gap: 20px; background: #363636; font-size: 7px; font-weight: 600; overflow: hidden; }
.acc { display: flex; align-items: center; gap: 3px; }
.views { display: flex; align-items: center; gap: 17px; margin-left: auto; color: #999; font-size: 8px; font-weight: 400; }
.zoom { display: flex; align-items: center; gap: 4px; }
.zoom input { appearance: none; width: 50px; height: 1px; background: #999; }
.zoom input::-webkit-slider-thumb { appearance: none; width: 2px; height: 6px; background: #ccc; }
.pct { width: 18px; overflow: hidden; }
</style>
